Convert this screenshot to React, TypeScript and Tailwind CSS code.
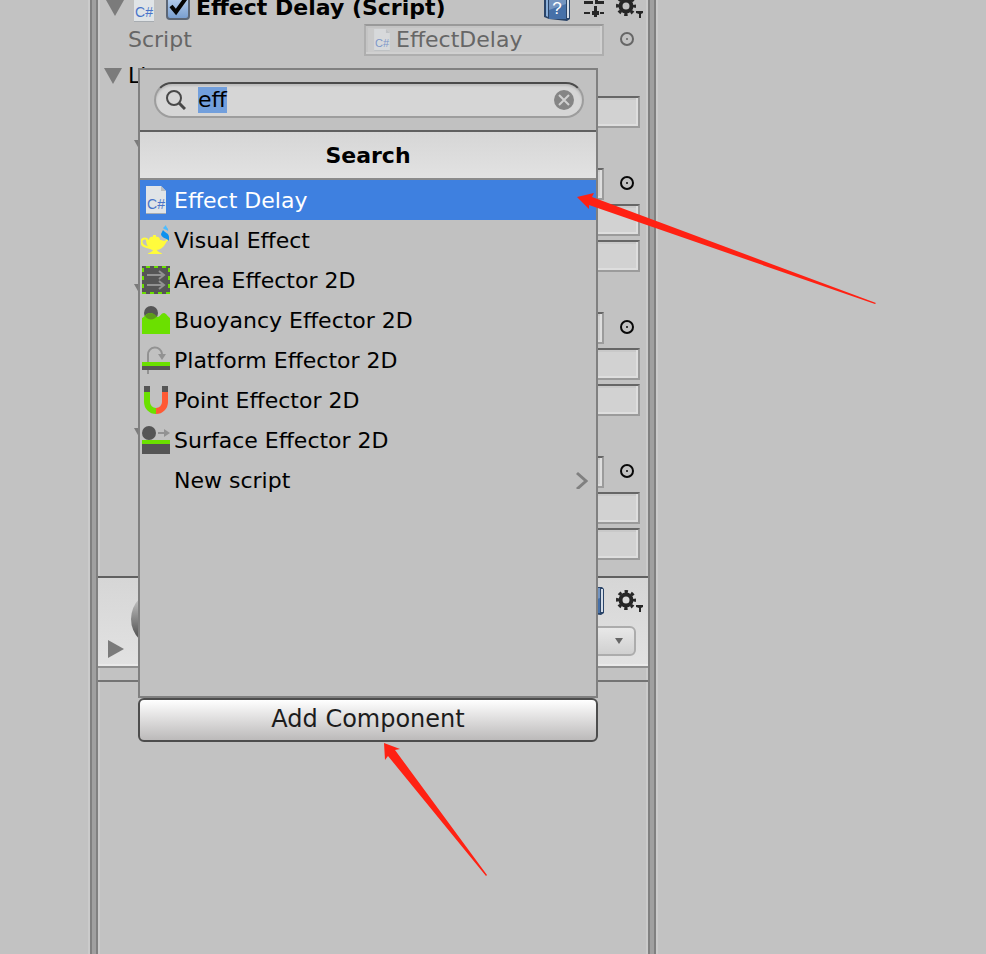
import React, { useEffect, useRef } from "react";

function Divider() {
  return (
    <div className="w-2 flex-none self-stretch border-x-2 border-[#808080] bg-[#a0a0a0] shadow-[-2px_0_0_#cbcbcb,2px_0_0_#cbcbcb]" />
  );
}

function Fold({ open = true }: { open?: boolean }) {
  return (
    <svg width="18" height="18" viewBox="0 0 18 18" className="flex-none" fill="#7b7b7b" aria-hidden="true">
      {open ? <path d="M0 1h18L9 17z" /> : <path d="M1 0v18l16-9z" />}
    </svg>
  );
}

function ScriptIcon({ className }: { className: string }) {
  return (
    <svg viewBox="0 0 20 28" className={className} aria-hidden="true">
      <path d="M0 0h15l5 5v23H0z" fill="#e0e4e7" />
      <path d="M15 0v5h5z" fill="#b9bec3" />
      <path d="M0 27.500h20" stroke="#a7acb1" />
      <text x="10" y="23" textAnchor="middle" fontSize="14" fontFamily="Liberation Sans, sans-serif" fill="#4a74c9">
        C#
      </text>
    </svg>
  );
}

function LampIcon() {
  return (
    <svg viewBox="0 0 30 30" className="size-[30px]" aria-hidden="true">
      <path d="M7 15C4 12 0 14 0.500 17c0 4 4 5 9 6" fill="none" stroke="#fffb3c" strokeWidth="2" />
      <path d="M8 15c0-3 2-3 4-3.500V10h3v1.500c2 .5 4 .5 4 3.500z" fill="#fffb3c" />
      <path d="M5 15h15l3 1c2-.5 2-2 5-2v1c-3 1-3 4-6 7-2 2-4 3-7 3h-3c-4 0-7-6-7-10z" fill="#fffb3c" />
      <path d="M7 29c0-2 4-1 5-4h4c1 3 5 2 5 4z" fill="#fffb3c" />
      <path d="M20 9l2-4c2 3 6 3 6 7v4c-2-3-8-3-8-7z" fill="#0c91f0" />
      <path d="M22 3l3-3c0 3 3 3 2 6-2-2-4-1-5-3z" fill="#4dbcff" />
    </svg>
  );
}

function AreaIcon() {
  return (
    <svg viewBox="0 0 28 28" className="size-7" aria-hidden="true">
      <path d="M0 0h28v28H0z" fill="#555" />
      <path d="M1 1h26v26H1z" fill="none" stroke="#6be000" strokeWidth="2" strokeDasharray="4 4" strokeDashoffset="-3" />
      <g fill="none" stroke="#929292" strokeWidth="2">
        <path d="M5 9h16M5 19h16" />
        <path d="M17 5l5 4-5 4M17 15l5 4-5 4" />
      </g>
    </svg>
  );
}

function BuoyancyIcon() {
  return (
    <svg viewBox="0 0 28 28" className="size-7" aria-hidden="true">
      <circle cx="9" cy="7" r="7" fill="#555" />
      <path d="M0 12c3-1 4-5 8-5 5 0 5 4 8 4 3-1 3-4 6-4 2 0 4 4 6 5v16H0z" fill="#6be000" />
      <path d="M3 10c2-2 3-3 5-3 5 0 5 3 7 3a7 7 0 0 1-12 0z" fill="#5d9b1c" />
    </svg>
  );
}

function PlatformIcon() {
  return (
    <svg viewBox="0 0 28 28" className="size-7" aria-hidden="true">
      <path d="M6 28V9a7 7 0 0 1 14-1v3" fill="none" stroke="#929292" strokeWidth="2" />
      <path d="M16 8h8l-4 6z" fill="#929292" />
      <path d="M0 20h28v4H0z" fill="#555" />
      <path d="M0 16h28v4H0z" fill="#6be000" />
    </svg>
  );
}

function PointIcon() {
  return (
    <svg viewBox="0 0 28 28" className="size-7" aria-hidden="true">
      <path d="M2 6h6v10a6 6 0 0 0 6 6v6A12 12 0 0 1 2 16z" fill="#6be000" />
      <path d="M26 6h-6v10a6 6 0 0 1-6 6v6a12 12 0 0 0 12-12z" fill="#ff5a34" />
      <path d="M2 0h6v6H2zM20 0h6v6h-6z" fill="#555" />
    </svg>
  );
}

function SurfaceIcon() {
  return (
    <svg viewBox="0 0 28 28" className="size-7" aria-hidden="true">
      <circle cx="7" cy="7" r="7" fill="#555" />
      <path d="M16 6h6V3l6 4-6 4V8h-6z" fill="#929292" />
      <path d="M0 18h28v10H0z" fill="#555" />
      <path d="M0 14h28v4H0z" fill="#6be000" />
    </svg>
  );
}

function BookIcon() {
  return (
    <svg viewBox="0 0 26 30" className="h-[30px] w-[26px]" aria-hidden="true">
      <path d="M0 3l5-2h19l2 2v24l-3 2-18-2-5-2z" fill="#2a4468" />
      <path d="M2 5l2-2v22l-2-1z" fill="#8bb0da" />
      <path d="M5 2h17v25H5z" fill="#4670a8" />
      <path d="M5 2h17v10L5 18z" fill="#7394c0" />
      <path d="M23 3h2v23h-2z" fill="#d5dde8" />
      <text x="13" y="22" textAnchor="middle" fontSize="17" fontFamily="Liberation Sans, sans-serif" fill="#fff">
        ?
      </text>
    </svg>
  );
}

function PresetIcon() {
  return (
    <svg viewBox="0 0 20 20" className="size-5" fill="#262626" aria-hidden="true">
      <path d="M0 4h9v3H0zM14 4h6v3h-6zM11 0h3v7h-3z" />
      <path d="M0 15h6v2H0zM16 15h4v2h-4zM8 14h7v4H8zM10 9h3v11h-3z" />
    </svg>
  );
}

function GearIcon() {
  return (
    <svg viewBox="0 0 28 24" className="h-6 w-7" aria-hidden="true">
      <circle cx="10" cy="11" r="5.500" fill="none" stroke="#262626" strokeWidth="4" />
      <circle cx="10" cy="11" r="8.500" fill="none" stroke="#262626" strokeWidth="3" strokeDasharray="3.400 3.276" strokeDashoffset="1.700" />
      <path d="M20 16h7v2l-2 1v4h-2v-4l-3-1z" fill="#262626" />
    </svg>
  );
}

function Picker({ muted = false }: { muted?: boolean }) {
  return (
    <button type="button" aria-label="Select object" className="w-9 flex-none pb-[2px] pl-4">
      <svg viewBox="0 0 14 14" className={muted ? "size-[14px] text-[#666]" : "size-[14px] text-[#080808]"} aria-hidden="true">
        <circle cx="7" cy="7" r="6" fill="none" stroke="currentColor" strokeWidth="2" />
        <circle cx="7" cy="7" r="1" fill="currentColor" />
      </svg>
    </button>
  );
}

const fieldClass =
  "h-8 w-full min-w-0 border-2 border-[#9b9b9b] border-t-[#666] bg-[#d2d2d2] px-2 shadow-[inset_-2px_-2px_0_#dedede,inset_2px_2px_0_#c9c9c9] outline-none";

function ValueRow({ label }: { label: string }) {
  return (
    <div className="flex h-8 items-center pr-2 pl-[266px]">
      <input aria-label={label} className={fieldClass} />
    </div>
  );
}

function Group({ index }: { index: number }) {
  return (
    <>
      <div className="flex h-8 items-center pl-9">
        <Fold />
      </div>
      <div className="flex h-8 items-center pr-2 pl-[266px]">
        <input aria-label={`Target ${index}`} className={fieldClass} />
        <Picker />
      </div>
      <ValueRow label={`Start ${index}`} />
      <ValueRow label={`Duration ${index}`} />
    </>
  );
}

const results = [
  { name: "Effect Delay", icon: <ScriptIcon className="h-7 w-5" /> },
  { name: "Visual Effect", icon: <LampIcon /> },
  { name: "Area Effector 2D", icon: <AreaIcon /> },
  { name: "Buoyancy Effector 2D", icon: <BuoyancyIcon /> },
  { name: "Platform Effector 2D", icon: <PlatformIcon /> },
  { name: "Point Effector 2D", icon: <PointIcon /> },
  { name: "Surface Effector 2D", icon: <SurfaceIcon /> },
  { name: "New script", icon: null },
];

function ComponentMenu() {
  const search = useRef<HTMLInputElement>(null);
  useEffect(() => {
    search.current?.focus({ preventScroll: true });
    search.current?.select();
  }, []);
  return (
    <div className="absolute top-[68px] right-[50px] left-10 z-20">
      <div className="min-h-[630px] border-2 border-[#808080] bg-[#c1c1c1]">
        <div className="py-3 pr-3 pl-[14px]">
          <label className="flex h-9 items-center rounded-full border-2 border-[#9d9d9d] border-t-[#4b4b4b] bg-[#d6d6d6] pr-2 pl-[10px] shadow-[inset_0_2px_2px_#bdbdbd]">
            <svg viewBox="0 0 20 20" className="size-5 flex-none" fill="none" stroke="#484848" strokeWidth="2" aria-hidden="true">
              <circle cx="8" cy="8" r="7" />
              <path d="M13 13l6 6" strokeWidth="3" />
            </svg>
            <input
              ref={search}
              aria-label="Search components"
              spellCheck={false}
              defaultValue="eff"
              className="ml-3 w-full min-w-0 bg-transparent leading-[26px] text-black caret-transparent outline-none selection:bg-[#729fdc] selection:text-black"
            />
            <button type="button" aria-label="Clear search" className="flex-none">
              <svg viewBox="0 0 20 20" className="size-5" aria-hidden="true">
                <circle cx="10" cy="10" r="10" fill="#858585" />
                <path d="M5 5l10 10M15 5L5 15" stroke="#d0d0d0" strokeWidth="2" />
              </svg>
            </button>
          </label>
        </div>
        <h2 className="flex h-[50px] items-center justify-center border-y-2 border-t-[#606060] border-b-[#8b8b8b] bg-linear-to-b from-[#d6d6d6] to-[#e2e2e2] pt-[2px] font-bold">
          Search
        </h2>
        <ul>
          {results.map((item, i) => (
            <li key={item.name}>
              <button
                type="button"
                className={
                  i === 0
                    ? "flex h-10 w-full items-center bg-[#3e80e0] pr-2 text-left text-white"
                    : "flex h-10 w-full items-center pr-2 text-left text-black"
                }
              >
                <span className="flex w-8 flex-none justify-center">{item.icon}</span>
                <span className="ml-[2px] flex-1 pt-[2px]">{item.name}</span>
                {item.icon === null && (
                  <svg viewBox="0 0 12 18" className="h-[18px] w-3" fill="none" stroke="#808080" strokeWidth="3" aria-hidden="true">
                    <path d="M1 2l9 8-9 8" />
                  </svg>
                )}
              </button>
            </li>
          ))}
        </ul>
      </div>
      <button
        type="button"
        className="flex h-11 w-full items-center justify-center rounded-md border-2 border-[#4d4d4d] bg-linear-to-b from-white to-[#bcbaba] pb-[2px] text-2xl text-[#1c1c1c]"
      >
        Add Component
      </button>
    </div>
  );
}

export default function App() {
  return (
    <main className="relative flex h-screen min-h-[760px] overflow-hidden bg-[#c2c2c2] font-['DejaVu_Sans',Verdana,sans-serif] text-[22px] leading-7 text-black">
      <div className="w-[90px] flex-none" />
      <Divider />
      <section className="relative min-w-0 flex-1">
        <header className="flex h-4 items-center pr-1 pl-2">
          <Fold />
          <ScriptIcon className="ml-[10px] h-7 w-5 flex-none" />
          <label className="ml-3 flex items-center gap-[6px] font-bold whitespace-nowrap">
            <span className="relative flex">
              <input
                type="checkbox"
                defaultChecked
                className="size-6 appearance-none rounded border-2 border-[#5c6675] bg-linear-to-b from-[#b6cfee] to-[#7a9fd0]"
              />
              <svg viewBox="0 0 24 24" className="pointer-events-none absolute inset-0 size-6" fill="none" stroke="#050505" strokeWidth="4" aria-hidden="true">
                <path d="M5 10l5 6L20 2" />
              </svg>
            </span>
            Effect Delay (Script)
          </label>
          <div className="ml-auto flex items-center pb-[2px]">
            <button type="button" aria-label="Help"><BookIcon /></button>
            <button type="button" aria-label="Presets" className="ml-[14px]"><PresetIcon /></button>
            <button type="button" aria-label="Settings" className="ml-3"><GearIcon /></button>
          </div>
        </header>

        <div className="mt-2 grid gap-1">
          <div className="flex h-8 items-center pr-2 text-[#666]">
            <span className="w-[266px] flex-none pl-[30px]">Script</span>
            <div className="flex h-8 min-w-0 flex-1 items-center border-2 border-[#aeaeae] border-t-[#999] bg-[#cacaca] pl-2 shadow-[inset_-2px_-2px_0_#d0d0d0,inset_2px_2px_0_#c4c4c4]">
              <ScriptIcon className="h-[22px] w-4 flex-none opacity-60" />
              <input aria-label="Script" readOnly value="EffectDelay" className="ml-[6px] w-full min-w-0 bg-transparent outline-none" />
            </div>
            <Picker muted />
          </div>
          <div className="flex h-8 items-center gap-[6px] pl-[6px]">
            <Fold />
            <span>List</span>
          </div>
          <ValueRow label="Size" />
          <Group index={0} />
          <Group index={1} />
          <Group index={2} />
        </div>

        <div className="mt-4 flex h-[92px] border-y-2 border-t-[#606060] border-b-[#909090] bg-linear-to-b from-[#d6d6d6] to-[#e2e2e2] shadow-[inset_0_-2px_0_#eaeaea]">
          <div className="flex items-end pb-2 pl-[9px]">
            <Fold open={false} />
          </div>
          <div className="mt-3 ml-[6px] size-[58px] flex-none rounded-full bg-linear-to-b from-[#e0e0e0] to-[#383838]" />
          <div className="ml-auto flex flex-col items-end justify-between pt-2 pb-[10px]">
            <div className="flex items-center pr-1">
              <button type="button" aria-label="Material help"><BookIcon /></button>
              <button type="button" aria-label="Material settings" className="ml-3"><GearIcon /></button>
            </div>
            <div className="relative mr-3 flex">
              <select aria-label="Shader" className="h-[30px] w-[300px] appearance-none rounded-md border-2 border-[#acacac] bg-linear-to-b from-[#e8e8e8] to-[#d0d0d0]">
                <option aria-label="Standard" />
              </select>
              <svg viewBox="0 0 8 6" className="pointer-events-none absolute top-3 right-[13px] h-[6px] w-2" fill="#666" aria-hidden="true">
                <path d="M0 0h8L4 6z" />
              </svg>
            </div>
          </div>
        </div>
        <div className="mt-3 h-[2px] bg-[#747474]" />

        <ComponentMenu />
      </section>
      <Divider />
      <div className="w-[330px] flex-none" />

      <svg viewBox="0 0 986 954" width="986" height="954" className="pointer-events-none absolute top-0 left-0 z-30" fill="#ff2113" aria-hidden="true">
        <path d="M577 197L594 193L592 197L876 303L875 304L589 205V209z" />
        <path d="M384 743L400 749L395 750L487 875L486 876L388 756L385 760z" />
      </svg>
    </main>
  );
}
